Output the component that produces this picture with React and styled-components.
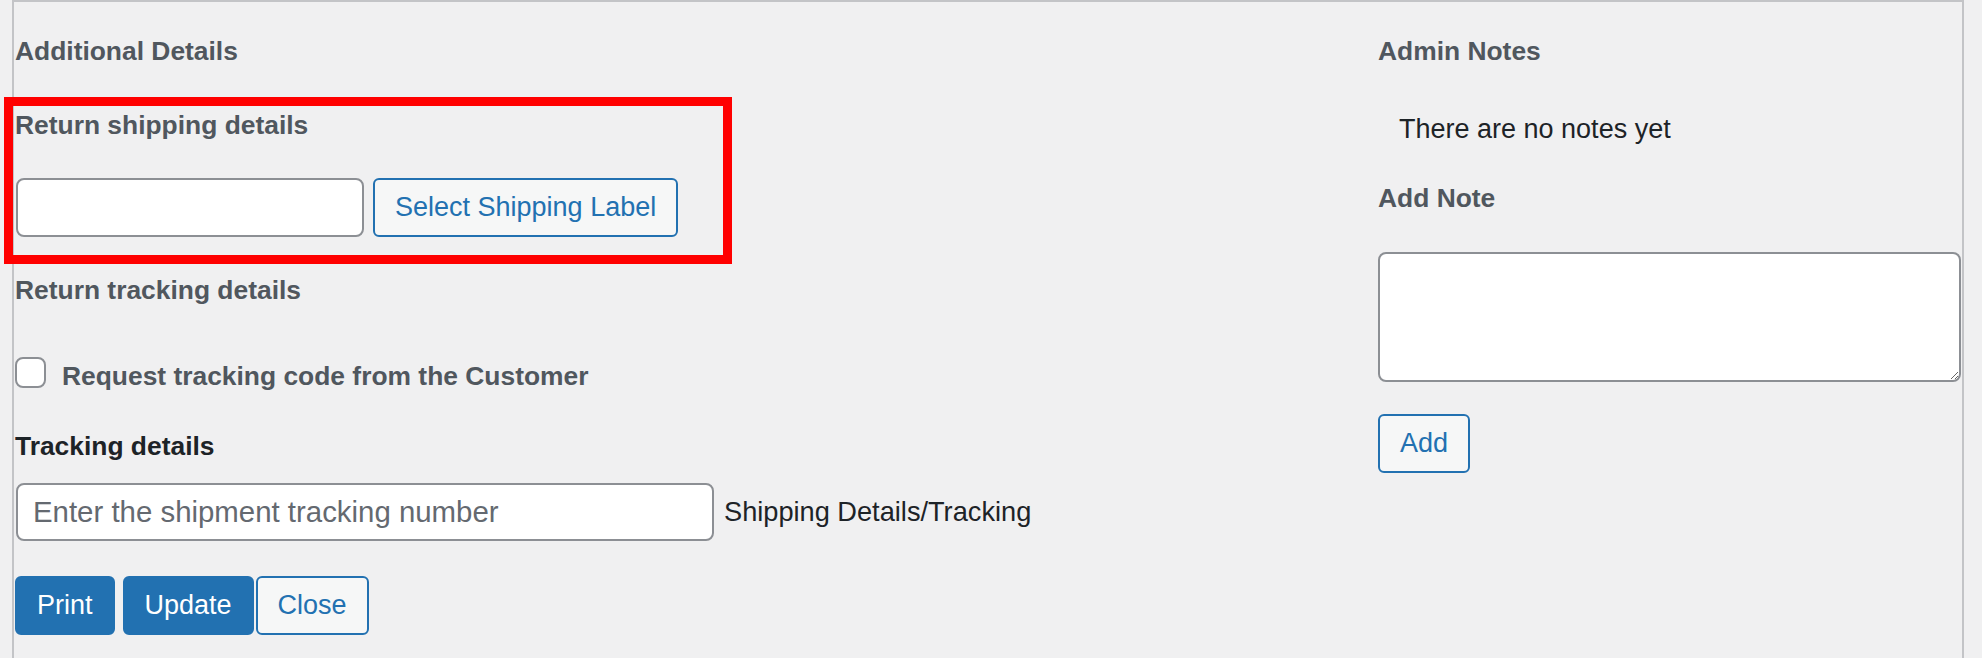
import React from 'react';
import styled, { createGlobalStyle } from 'styled-components';

const GlobalStyle = createGlobalStyle`
  html, body {
    margin: 0;
    padding: 0;
    overflow: hidden;
    background: #f0f0f1;
  }
  body {
    font-family: "Liberation Sans", Arial, sans-serif;
    color: #1d2327;
  }
  * {
    box-sizing: border-box;
  }
`;

function App() {
  return (
    <>
      <GlobalStyle />
      <Panel>
        <Columns>
          <LeftColumn>
            <Heading>Additional Details</Heading>
            <HighlightSection>
              <Label>Return shipping details</Label>
              <FieldRow gap={38}>
                <TextInput type="text" width={348} />
                <Button spacing={9}>Select Shipping Label</Button>
              </FieldRow>
            </HighlightSection>
            <Label spacing={20}>Return tracking details</Label>
            <CheckRow>
              <Checkbox type="checkbox" />
              <CheckLabel>Request tracking code from the Customer</CheckLabel>
            </CheckRow>
            <Label spacing={40} dark>
              Tracking details
            </Label>
            <FieldRow gap={22}>
              <TextInput
                type="text"
                width={698}
                height={58}
                placeholder="Enter the shipment tracking number"
              />
              <Hint>Shipping Details/Tracking</Hint>
            </FieldRow>
            <ButtonRow>
              <Button primary>Print</Button>
              <Button primary spacing={8}>
                Update
              </Button>
              <Button spacing={2}>Close</Button>
            </ButtonRow>
          </LeftColumn>

          <RightColumn>
            <Heading>Admin Notes</Heading>
            <EmptyNotes>There are no notes yet</EmptyNotes>
            <Heading spacing={38}>Add Note</Heading>
            <NoteArea />
            <AddRow>
              <Button>Add</Button>
            </AddRow>
          </RightColumn>
        </Columns>
      </Panel>
    </>
  );
}

export default App;

const Panel = styled.div`
  margin-left: 12px;
  width: 1952px;
  height: 100vh;
  border: 2px solid #c3c4c7;
  border-bottom: none;
  padding: 34px 0 0 1px;
`;

const Columns = styled.div`
  display: grid;
  grid-template-columns: 1fr 584px;
`;

const LeftColumn = styled.div`
  display: flex;
  flex-direction: column;
  align-items: flex-start;
`;

const RightColumn = styled.div`
  display: flex;
  flex-direction: column;
  align-items: stretch;
`;

const Heading = styled.h3`
  margin: ${({ spacing }) => spacing || 0}px 0 0;
  font-size: 26.4px;
  line-height: 30px;
  font-weight: 700;
  color: #50575e;
`;

const Label = styled.div`
  margin-top: ${({ spacing }) => spacing || 0}px;
  font-size: 26.4px;
  line-height: 30px;
  font-weight: 700;
  color: ${({ dark }) => (dark ? '#1d2327' : '#50575e')};
`;

const HighlightSection = styled.div`
  margin: 40px 0 0 -2px;
  width: 710px;
  padding: 4px 0 18px 2px;
  outline: 9px solid #ff0000;
`;

const FieldRow = styled.div`
  display: flex;
  align-items: center;
  margin-top: ${({ gap }) => gap}px;
`;

const TextInput = styled.input`
  width: ${({ width }) => width}px;
  height: ${({ height }) => height || 59}px;
  margin: 0 0 0 1px;
  padding: 0 15px;
  background: #ffffff;
  border: 2px solid #8c8f94;
  border-radius: 8px;
  font-family: inherit;
  font-size: 29.4px;
  color: #2c3338;
  outline: none;

  &::placeholder {
    color: #646970;
  }
`;

const Hint = styled.span`
  margin-left: 10px;
  font-size: 27.2px;
  line-height: 32px;
  color: #1d2327;
`;

const CheckRow = styled.label`
  display: flex;
  align-items: flex-start;
  margin-top: 52px;
`;

const Checkbox = styled.input`
  appearance: none;
  width: 31px;
  height: 31px;
  margin: 0;
  background: #ffffff;
  border: 2px solid #8c8f94;
  border-radius: 8px;
`;

const CheckLabel = styled.span`
  margin: 4px 0 0 16px;
  font-size: 26.4px;
  line-height: 30px;
  font-weight: 700;
  color: #50575e;
`;

const ButtonRow = styled.div`
  display: flex;
  margin-top: 35px;
`;

const Button = styled.button`
  display: inline-flex;
  align-items: center;
  height: 59px;
  margin: 0 0 0 ${({ spacing }) => spacing || 0}px;
  padding: 0 20px;
  border: 2px solid #2271b1;
  border-radius: 6px;
  background: ${({ primary }) => (primary ? '#2271b1' : '#f6f7f7')};
  color: ${({ primary }) => (primary ? '#ffffff' : '#2271b1')};
  font-family: inherit;
  font-size: 27px;
  white-space: nowrap;
  cursor: pointer;
`;

const EmptyNotes = styled.p`
  margin: 47px 0 0;
  padding-left: 21px;
  font-size: 27px;
  line-height: 32px;
  color: #1d2327;
`;

const NoteArea = styled.textarea`
  display: block;
  width: 583px;
  height: 130px;
  margin-top: 39px;
  background: #ffffff;
  border: 2px solid #8c8f94;
  border-radius: 8px;
  font-family: inherit;
  font-size: 27px;
  outline: none;
`;

const AddRow = styled.div`
  display: flex;
  margin-top: 32px;
`;
